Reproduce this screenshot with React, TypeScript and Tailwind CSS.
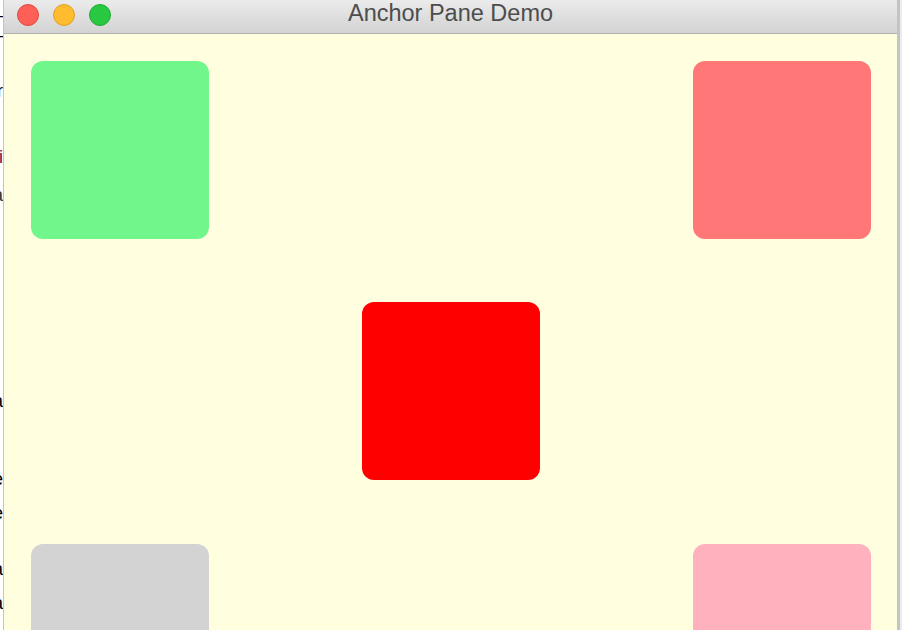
import React from "react";

export default function App() {
  const lines: { t: string; c: string; top: number }[] = [
    { t: "–", c: "#000", top: 6 },
    { t: "–", c: "#000", top: 26 },
    { t: "r", c: "#000", top: 82 },
    { t: "i", c: "#7a0a4a", top: 148 },
    { t: "a", c: "#333", top: 186 },
    { t: "a", c: "#000", top: 392 },
    { t: "e", c: "#000", top: 470 },
    { t: "e", c: "#000", top: 504 },
    { t: "a", c: "#000", top: 560 },
    { t: "a", c: "#000", top: 594 },
  ];
  return (
    <div className="w-[902px] h-[630px] overflow-hidden bg-white flex" style={{ fontFamily: '"Liberation Sans", Arial, sans-serif' }}>
      <div className="w-[3px] h-full relative overflow-hidden bg-white shrink-0">
        {lines.map((l, i) => (
          <span
            key={i}
            className="absolute right-0 text-[18px] leading-none"
            style={{ top: l.top, color: l.c }}
          >
            {l.t}
          </span>
        ))}
      </div>
      <div className="flex-1 flex flex-col border-l border-r-[3px] border-l-[#c4c4c4] border-r-[#c4c4c4] overflow-hidden">
        <div className="h-[34px] shrink-0 bg-gradient-to-b from-[#ebebeb] to-[#d3d3d3] border-b border-[#b0b0b0] relative flex items-center justify-center">
          <div className="absolute left-[13px] top-[4px] flex gap-[14px]">
            <div className="w-[22px] h-[22px] rounded-full bg-[#fe5f57] border border-[#e2463f]" />
            <div className="w-[22px] h-[22px] rounded-full bg-[#febc2e] border border-[#e0a028]" />
            <div className="w-[22px] h-[22px] rounded-full bg-[#28c840] border border-[#1faa33]" />
          </div>
          <span className="text-[23.5px] text-[#4d4d4d] -mt-[5px]">Anchor Pane Demo</span>
        </div>
        <div className="flex-1 bg-[#ffffe0] pl-[27px] pt-[27px] pr-[26px] flex flex-col">
          <div className="flex justify-between">
            <div className="w-[178px] h-[178px] rounded-[12px] bg-[#70f68a]" />
            <div className="w-[178px] h-[178px] rounded-[12px] bg-[#ff7777]" />
          </div>
          <div className="flex justify-center mt-[63px]">
            <div className="w-[178px] h-[178px] rounded-[12px] bg-[#ff0000]" />
          </div>
          <div className="flex justify-between mt-[64px]">
            <div className="w-[178px] h-[178px] rounded-[12px] bg-[#d3d3d3]" />
            <div className="w-[178px] h-[178px] rounded-[12px] bg-[#ffb1bd]" />
          </div>
        </div>
      </div>
      <div className="w-[2px] h-full bg-[#ececec] shrink-0" />
    </div>
  );
}
